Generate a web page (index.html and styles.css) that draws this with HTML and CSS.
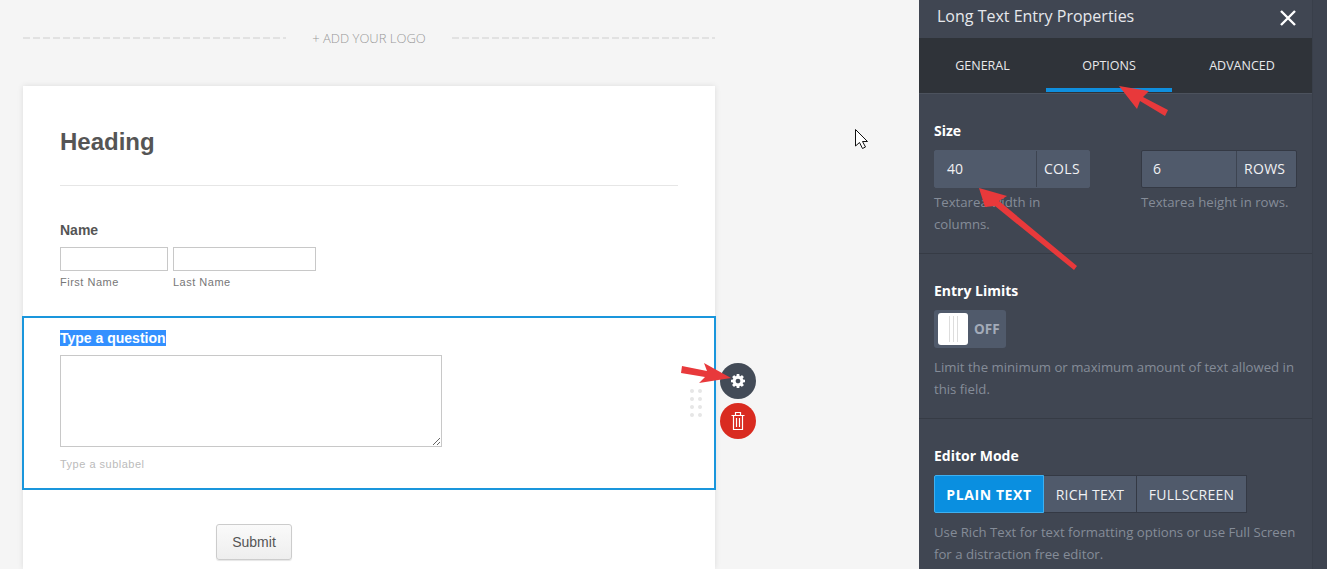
FILE: index.html
```html
<!DOCTYPE html>
<html lang="en">
<head>
    <meta charset="UTF-8">
    <title>Form Builder</title>
    <link rel="stylesheet" href="styles.css">
</head>
<body>
    <div class="page">
        <main class="canvas">
            <div class="logo-row">
                <span class="dash"></span>
                <span class="logo-text">+ ADD YOUR LOGO</span>
                <span class="dash"></span>
            </div>

            <div class="card">
                <div class="heading-block">
                    <h1>Heading</h1>
                </div>

                <div class="name-block">
                    <div class="q-label">Name</div>
                    <div class="name-row">
                        <label class="name-first">
                            <input type="text">
                            <span>First Name</span>
                        </label>
                        <label class="name-last">
                            <input type="text">
                            <span>Last Name</span>
                        </label>
                    </div>
                </div>

                <div class="selected-block">
                    <div class="q-label"><span class="highlight">Type a question</span></div>
                    <textarea></textarea>
                    <div class="sublabel">Type a sublabel</div>

                    <div class="drag-dots">
                        <i></i><i></i><i></i><i></i><i></i><i></i><i></i><i></i>
                    </div>
                    <button class="round-btn gear-btn" aria-label="Properties">
                        <svg width="14" height="14" viewBox="0 0 1536 1536"><path fill="#fff" d="M1024 768q0-106-75-181t-181-75-181 75-75 181 75 181 181 75 181-75 75-181zm512-109v222q0 12-8 23t-20 13l-185 28q-19 54-39 91 35 50 107 138 10 12 10 25t-9 23q-27 37-99 108t-94 71q-12 0-26-9l-138-108q-44 23-91 38-16 136-29 186-7 28-36 28h-222q-14 0-24.500-8.500t-11.500-21.500l-28-184q-49-16-90-37l-141 107q-10 9-25 9-14 0-25-11-126-114-165-168-7-10-7-23 0-12 8-23 15-21 51-66.500t54-70.500q-27-50-41-99l-183-27q-13-2-21-12.500t-8-23.500v-222q0-12 8-23t19-13l186-28q14-46 39-92-40-57-107-138-10-12-10-24 0-10 9-23 26-36 98.500-107.500t94.500-71.500q13 0 26 10l138 107q44-23 91-38 16-136 29-186 7-28 36-28h222q14 0 24.500 8.500t11.500 21.500l28 184q49 16 90 37l142-107q9-9 24-9 13 0 25 10 129 119 165 170 7 8 7 22 0 12-8 23-15 21-51 66.500t-54 70.500q26 50 41 98l183 28q13 2 21 12.500t8 23.500z"/></svg>
                    </button>
                    <button class="round-btn trash-btn" aria-label="Delete">
                        <svg width="14" height="20" viewBox="0 0 14 20" fill="none" stroke="#fff" stroke-width="1.200"><path d="M0.500 4.500h13M4.500 4.500v-3h5v3M2.500 4.500v14h9v-14M5.500 7v9M8.500 7v9"/></svg>
                    </button>
                </div>

                <div class="submit-row">
                    <button class="submit-btn">Submit</button>
                </div>
            </div>
        </main>

        <aside class="panel">
            <div class="panel-main">
                <header class="panel-head">
                    <span>Long Text Entry Properties</span>
                    <svg class="close-icon" width="16" height="16" viewBox="0 0 16 16"><path d="M1 1l14 14M15 1L1 15" stroke="#fff" stroke-width="2.400" fill="none"/></svg>
                </header>

                <nav class="tabs">
                    <a class="tab tab-general">GENERAL</a>
                    <a class="tab tab-options active">OPTIONS</a>
                    <a class="tab tab-advanced">ADVANCED</a>
                </nav>

                <section class="prop prop-size">
                    <h3>Size</h3>
                    <div class="size-cols">
                        <div>
                            <div class="unit-field plain">
                                <span class="val">40</span>
                                <span class="unit">COLS</span>
                            </div>
                            <p>Textarea width in columns.</p>
                        </div>
                        <div>
                            <div class="unit-field">
                                <span class="val">6</span>
                                <span class="unit">ROWS</span>
                            </div>
                            <p>Textarea height in rows.</p>
                        </div>
                    </div>
                </section>

                <section class="prop prop-limits">
                    <h3>Entry Limits</h3>
                    <div class="toggle">
                        <span class="knob"><i></i><i></i><i></i></span>
                        <span class="toggle-text">OFF</span>
                    </div>
                    <p>Limit the minimum or maximum amount of text allowed in this field.</p>
                </section>

                <section class="prop prop-mode">
                    <h3>Editor Mode</h3>
                    <div class="mode-group">
                        <a class="mode on">PLAIN TEXT</a>
                        <a class="mode m-rich">RICH TEXT</a>
                        <a class="mode m-full">FULLSCREEN</a>
                    </div>
                    <p>Use Rich Text for text formatting options or use Full Screen for a distraction free editor.</p>
                </section>
            </div>
            <div class="panel-gutter"></div>
        </aside>
    </div>

    <!-- annotations drawn on top of the screenshot -->
    <svg class="annotations" width="1327" height="569" viewBox="0 0 1327 569">
        <g fill="#e8393b">
            <polygon points="1119,86 1149,91 1143,97 1168,110 1165,116 1140,101 1137,109"/>
            <polygon points="979,188 1007,196 999,201 1077,266 1074,270 995,206 985,207"/>
            <polygon points="731,378 704,363 707,371 682,366 681,373 705,377 699,383"/>
        </g>
        <path d="M855.500 129.500V146l4-3.500 3 6 3-1.500-3-5.500h5z" fill="#fff" stroke="#111" stroke-width="1"/>
    </svg>
</body>
</html>
```

FILE: styles.css
```css
* {
    box-sizing: border-box;
}
html, body {
    margin: 0;
    height: 569px;
    overflow: hidden;
}
body {
    font-family: "Liberation Sans", Arial, sans-serif;
    background-color: #f5f5f5;
}
.page {
    display: flex;
    height: 569px;
}

/* left side, the form */
.canvas {
    width: 919px;
    flex: none;
    padding-left: 23px;
}
.logo-row {
    width: 692px;
    height: 86px;
    padding-bottom: 10px;
    display: flex;
    align-items: center;
    justify-content: space-between;
}
.dash {
    width: 263px;
    height: 2px;
    background: repeating-linear-gradient(90deg, #e2e2e2 0, #e2e2e2 7px, transparent 7px, transparent 10px);
}
.logo-text {
    font-family: "Open Sans", sans-serif;
    font-weight: 300;
    font-size: 13px;
    color: #999;
}
.card {
    width: 692px;
    height: 483px;
    background-color: #fff;
    box-shadow: 0 0 6px rgba(0, 0, 0, 0.1);
}
.heading-block {
    margin: 0 37px;
    height: 100px;
    padding-top: 41px;
    border-bottom: 1px solid #e6e6e6;
}
h1 {
    margin: 0;
    font-size: 24px;
    line-height: 30px;
    color: #555;
}
.q-label {
    font-size: 14px;
    font-weight: bold;
    line-height: 16px;
    color: #555;
}
.name-block {
    height: 130px;
    padding: 36px 0 0 37px;
}
.name-row {
    display: flex;
    gap: 5px;
    margin-top: 9px;
}
.name-row label {
    display: block;
}
.name-row input {
    display: block;
    width: 100%;
    height: 24px;
    border: 1px solid #c8c8c8;
    background: #fff;
}
.name-first {
    width: 108px;
}
.name-last {
    width: 143px;
}
.name-row span {
    display: block;
    margin-top: 5px;
    font-size: 11px;
    line-height: 13px;
    letter-spacing: 0.5px;
    color: #777;
}
.selected-block {
    position: relative;
    width: 694px;
    height: 174px;
    margin-left: -1px;
    padding: 12px 0 0 36px;
    border: 2px solid #1a96dc;
}
.highlight {
    background-color: #3390ff;
    color: #fff;
}
textarea {
    display: block;
    width: 382px;
    height: 92px;
    margin-top: 9px;
    border: 1px solid #c8c8c8;
    background: #fff;
}
.sublabel {
    margin-top: 11px;
    font-size: 11px;
    line-height: 13px;
    letter-spacing: 0.5px;
    color: #bbb;
}
.drag-dots {
    position: absolute;
    left: 666px;
    top: 71px;
    display: grid;
    grid-template-columns: 4px 4px;
    gap: 4px;
}
.drag-dots i {
    width: 4px;
    height: 4px;
    border-radius: 50%;
    background-color: #e6e6e6;
}
.round-btn {
    position: absolute;
    left: 696px;
    width: 36px;
    height: 36px;
    padding: 0;
    border: none;
    border-radius: 50%;
    display: flex;
    align-items: center;
    justify-content: center;
}
.gear-btn {
    top: 45px;
    background-color: #434b57;
}
.trash-btn {
    top: 85px;
    background-color: #d92b20;
}
.submit-row {
    padding: 34px 0 0 193px;
}
.submit-btn {
    width: 76px;
    height: 36px;
    font-family: "Liberation Sans", Arial, sans-serif;
    font-size: 14px;
    color: #555;
    border: 1px solid #ccc;
    border-radius: 3px;
    background: linear-gradient(#fafafa, #eee);
    box-shadow: 0 1px 1px rgba(0, 0, 0, 0.1);
}

/* right side, properties panel */
.panel {
    flex: 1;
    display: flex;
    font-family: "Open Sans", sans-serif;
    background-color: #404652;
}
.panel-main {
    width: 393px;
    flex: none;
}
.panel-gutter {
    flex: 1;
    background-color: #3d434f;
    border-left: 1px solid #393f4a;
}
.panel-head {
    height: 38px;
    padding: 0 16px 6px 18px;
    display: flex;
    align-items: center;
    justify-content: space-between;
    font-size: 16px;
    color: #e6e8ec;
}
.close-icon {
    margin-top: 4px;
}
.tabs {
    display: flex;
    height: 56px;
    background-color: #2f3339;
    border-bottom: 1px solid #4c525d;
}
.tab {
    height: 54px;
    display: flex;
    align-items: center;
    justify-content: center;
    font-size: 12.500px;
    color: #e8e9eb;
}
.tab-general {
    width: 127px;
}
.tab-options {
    width: 126px;
}
.tab-advanced {
    width: 140px;
}
.tab.active {
    box-shadow: inset 0 -4px 0 #0f8fde;
}
.prop {
    padding: 27px 15px 0;
    border-bottom: 1px solid #363b45;
}
.prop-size {
    height: 160px;
}
.prop-limits {
    height: 165px;
}
.prop-mode {
    border-bottom: none;
}
h3 {
    margin: 0;
    font-size: 14px;
    line-height: 20px;
    font-weight: 700;
    color: #fff;
}
.prop p {
    margin: 0;
    font-size: 13.200px;
    line-height: 22px;
    color: #858c98;
}
.size-cols {
    display: grid;
    grid-template-columns: 156px 156px;
    column-gap: 51px;
    margin-top: 9px;
}
.size-cols p {
    margin-top: 3px;
}
.unit-field {
    display: flex;
    height: 38px;
    padding-bottom: 2px;
    border: 1px solid #343944;
    border-radius: 2px;
    background-color: #505a6b;
    font-size: 14px;
    color: #f0f1f3;
    align-items: stretch;
}
.unit-field.plain {
    border-color: #505a6b;
}
.val {
    width: 94px;
    padding-left: 11px;
    display: flex;
    align-items: center;
}
.plain .val {
    width: 101px;
    padding-left: 12px;
}
.unit {
    flex: 1;
    display: flex;
    align-items: center;
    padding-left: 7px;
    letter-spacing: 0.3px;
    margin-bottom: -2px;
    padding-bottom: 2px;
    border-left: 1px solid #3d4451;
}
.toggle {
    display: flex;
    align-items: center;
    width: 72px;
    height: 38px;
    margin-top: 9px;
    padding-left: 4px;
    border-radius: 3px;
    background-color: #505a6b;
}
.knob {
    width: 30px;
    height: 32px;
    display: flex;
    justify-content: center;
    gap: 3px;
    padding: 3px 0;
    border-radius: 3px;
    background-color: #fff;
}
.knob i {
    width: 1px;
    background-color: #ddd;
}
.toggle-text {
    margin-left: 6px;
    font-size: 13.500px;
    font-weight: 700;
    color: #a3abb9;
}
.prop-limits p {
    margin-top: 8px;
}
.mode-group {
    display: flex;
    height: 38px;
    margin-top: 9px;
}
.mode {
    display: flex;
    align-items: center;
    justify-content: center;
    font-size: 14px;
    letter-spacing: 0.2px;
    color: #f0f1f3;
    background-color: #505a6b;
    border: 1px solid #343944;
    border-left: none;
}
.mode.on {
    width: 110px;
    font-weight: 700;
    letter-spacing: 0.6px;
    color: #fff;
    background-color: #0a8fe0;
    border: 1px solid #3fb0f0;
    border-radius: 2px 0 0 2px;
}
.m-rich {
    width: 93px;
}
.m-full {
    width: 110px;
}
.prop-mode p {
    margin-top: 8px;
}
.annotations {
    position: absolute;
    left: 0;
    top: 0;
    pointer-events: none;
}
```
